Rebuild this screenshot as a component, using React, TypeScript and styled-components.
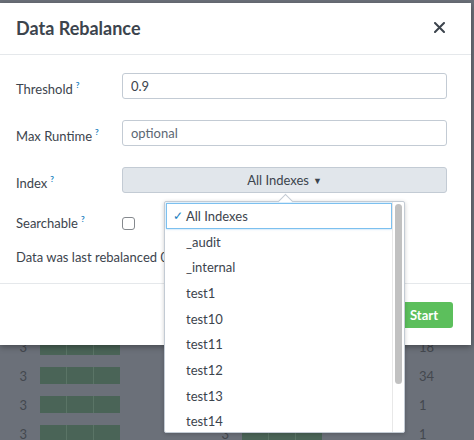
import React from "react";
import styled, { createGlobalStyle } from "styled-components";

const GlobalStyle = createGlobalStyle`
    html, body {
        margin: 0;
        padding: 0;
        background: #5f636a;
    }
    body {
        font-family: Lato, "Open Sans", "Liberation Sans", sans-serif;
        color: #3c444d;
    }
`

const Page = styled.div`
    position: relative;
    width: 474px;
    height: 440px;
    overflow: hidden;
    background: #6b7079;
`

const Table = styled.div`
    padding-top: 332px;
    display: flex;
    flex-direction: column;
`

const TableRow = styled.div`
    height: 29px;
    display: flex;
    align-items: center;
    font-size: 13px;
    color: #44484f;
`

const Count = styled.span<{ $width: number }>`
    width: ${(props) => props.$width}px;
    text-align: right;
    padding-right: 13px;
    box-sizing: border-box;
`

const Bars = styled.div`
    display: flex;
    height: 17px;
    gap: 1px;
    background: #5a7466;
`

const BarCell = styled.div`
    width: 26px;
    height: 100%;
    background: #4a6457;
`

const Spacer = styled.div<{ $width: number }>`
    width: ${(props) => props.$width}px;
`

const Number = styled.span`
    font-size: 13px;
    color: #44484f;
`

const Modal = styled.div`
    position: absolute;
    top: 3px;
    left: 0;
    width: 471px;
    height: 342px;
    background: #ffffff;
    box-shadow: 0 2px 6px rgba(0, 0, 0, 0.35);
    display: flex;
    flex-direction: column;
`

const Header = styled.div`
    height: 52px;
    flex-shrink: 0;
    border-bottom: 1px solid #e5e8eb;
    display: flex;
    align-items: center;
    justify-content: space-between;
    padding: 0 26px 2px 16px;
    box-sizing: border-box;
`

const Title = styled.h2`
    margin: 0;
    font-size: 18px;
    font-weight: 700;
    color: #3c444d;
`

const CloseButton = styled.button`
    border: none;
    background: none;
    padding: 0;
    display: flex;
    cursor: pointer;
`

const Body = styled.div`
    height: 228px;
    flex-shrink: 0;
    padding: 18px 24px 0 16px;
    box-sizing: border-box;
    display: flex;
    flex-direction: column;
`

const FieldRow = styled.div<{ $align?: string; $gap?: number }>`
    display: flex;
    align-items: ${(props) => props.$align || "center"};
    height: 26px;
    margin-bottom: ${(props) => props.$gap ?? 21}px;
`

const Label = styled.label<{ $top?: number }>`
    width: 106px;
    flex-shrink: 0;
    font-size: 13px;
    color: #3c444d;
    padding-top: ${(props) => props.$top ?? 4}px;
`

const Help = styled.sup`
    color: #1a7fc1;
    font-size: 8px;
    font-weight: 700;
    margin-left: 3px;
    vertical-align: 6px;
`

const Input = styled.input`
    flex: 1;
    height: 26px;
    box-sizing: border-box;
    border: 1px solid #c3cbd4;
    border-radius: 3px;
    padding: 0 8px;
    font-family: inherit;
    font-size: 13px;
    color: #3c444d;
    &::placeholder {
        color: #5c6773;
    }
`

const SelectButton = styled.button`
    flex: 1;
    height: 26px;
    box-sizing: border-box;
    border: 1px solid #c3cbd4;
    border-radius: 3px;
    background: #e1e6eb;
    font-family: inherit;
    font-size: 13px;
    color: #3c444d;
    display: flex;
    align-items: center;
    justify-content: center;
    gap: 4px;
`

const Caret = styled.span`
    font-size: 9px;
`

const Checkbox = styled.span`
    width: 13px;
    height: 13px;
    margin-top: 3px;
    border: 1px solid #85898e;
    border-radius: 3px;
    box-sizing: border-box;
    background: #fff;
`

const Info = styled.p`
    margin: 0;
    font-size: 13px;
    color: #3c444d;
`

const Footer = styled.div`
    flex: 1;
    border-top: 1px solid #e5e8eb;
    display: flex;
    justify-content: flex-end;
    align-items: flex-start;
    padding: 18px 18px 0 0;
`

const StartButton = styled.button`
    width: 58px;
    height: 26px;
    border: none;
    border-radius: 3px;
    background: #5cbf5c;
    color: #fff;
    font-family: inherit;
    font-size: 13px;
    font-weight: 700;
`

const Menu = styled.div`
    position: absolute;
    top: 201px;
    left: 164px;
    width: 241px;
    height: 232px;
    box-sizing: border-box;
    background: #fff;
    border: 1px solid #c3cbd4;
    border-radius: 2px;
    box-shadow: 0 1px 4px rgba(0, 0, 0, 0.2);
    display: flex;
`

const MenuArrow = styled.div`
    position: absolute;
    top: -6px;
    left: 115px;
    width: 10px;
    height: 10px;
    background: #fff;
    border-top: 1px solid #c3cbd4;
    border-left: 1px solid #c3cbd4;
    transform: rotate(45deg);
`

const MenuList = styled.ul`
    flex: 1;
    margin: 0;
    padding: 1px 0 0 1px;
    list-style: none;
    overflow: hidden;
    position: relative;
`

const MenuItem = styled.li<{ $active?: boolean }>`
    height: 25.7px;
    box-sizing: border-box;
    display: flex;
    align-items: center;
    padding-left: ${(props) => (props.$active ? "6px" : "19px")};
    font-size: 13px;
    color: #3c444d;
    border: 1px solid ${(props) => (props.$active ? "#7cc0ef" : "transparent")};
    box-shadow: ${(props) => (props.$active ? "0 0 2px rgba(60, 160, 230, 0.5)" : "none")};
`

const Check = styled.span`
    color: #1a7fc1;
    width: 13px;
    font-size: 12px;
`

const ScrollTrack = styled.div`
    width: 12px;
    flex-shrink: 0;
    border-left: 1px solid #e8e8e8;
    padding: 2px 2px;
    box-sizing: border-box;
`

const ScrollThumb = styled.div`
    width: 7px;
    height: 180px;
    border-radius: 4px;
    background: #c1c1c1;
`

const rightNumbers = ["18", "34", "1", "1"];
const indexes = ["All Indexes", "_audit", "_internal", "test1", "test10", "test11", "test12", "test13", "test14", "test15"];

const BarGroup = () => (
    <Bars>
        <BarCell />
        <BarCell />
        <BarCell />
    </Bars>
)

const CloseIcon = () => (
    <svg width="11" height="11" viewBox="0 0 11 11">
        <path d="M1 1 L10 10 M10 1 L1 10" stroke="#3c444d" strokeWidth="2" strokeLinecap="round" />
    </svg>
)

export default function App() {
    return (
        <Page>
            <GlobalStyle />
            <Table>
                {rightNumbers.map((n, i) => (
                    <TableRow key={i}>
                        <Count $width={40}>3</Count>
                        <BarGroup />
                        <Spacer $width={70} />
                        <Count $width={52}>3</Count>
                        <BarGroup />
                        <Spacer $width={97} />
                        <Number>{n}</Number>
                    </TableRow>
                ))}
            </Table>
            <Modal>
                <Header>
                    <Title>Data Rebalance</Title>
                    <CloseButton aria-label="Close">
                        <CloseIcon />
                    </CloseButton>
                </Header>
                <Body>
                    <FieldRow>
                        <Label>Threshold<Help>?</Help></Label>
                        <Input defaultValue="0.9" />
                    </FieldRow>
                    <FieldRow>
                        <Label>Max Runtime<Help>?</Help></Label>
                        <Input placeholder="optional" />
                    </FieldRow>
                    <FieldRow>
                        <Label>Index<Help>?</Help></Label>
                        <SelectButton>
                            All Indexes <Caret>▼</Caret>
                        </SelectButton>
                    </FieldRow>
                    <FieldRow $align="flex-start" $gap={9}>
                        <Label $top={-3}>Searchable<Help>?</Help></Label>
                        <Checkbox />
                    </FieldRow>
                    <Info>Data was last rebalanced 0 days ago.</Info>
                </Body>
                <Footer>
                    <StartButton>Start</StartButton>
                </Footer>
            </Modal>
            <Menu>
                <MenuArrow />
                <MenuList>
                    {indexes.map((name, i) => (
                        <MenuItem key={name} $active={i === 0}>
                            {i === 0 && <Check>✓</Check>}
                            {name}
                        </MenuItem>
                    ))}
                </MenuList>
                <ScrollTrack>
                    <ScrollThumb />
                </ScrollTrack>
            </Menu>
        </Page>
    )
}
